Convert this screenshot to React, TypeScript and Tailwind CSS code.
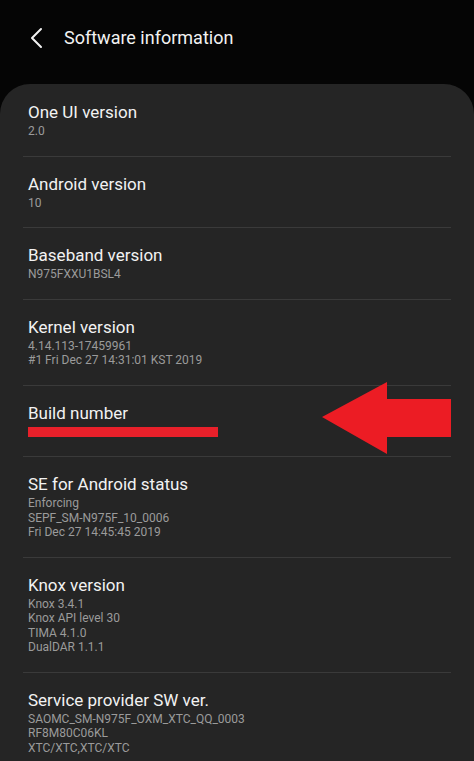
import React from "react";

type Item = { title: string; lines: string[]; redacted?: boolean };

const items: Item[] = [
  { title: "One UI version", lines: ["2.0"] },
  { title: "Android version", lines: ["10"] },
  { title: "Baseband version", lines: ["N975FXXU1BSL4"] },
  { title: "Kernel version", lines: ["4.14.113-17459961", "#1 Fri Dec 27 14:31:01 KST 2019"] },
  { title: "Build number", lines: [], redacted: true },
  { title: "SE for Android status", lines: ["Enforcing", "SEPF_SM-N975F_10_0006", "Fri Dec 27 14:45:45 2019"] },
  { title: "Knox version", lines: ["Knox 3.4.1", "Knox API level 30", "TIMA 4.1.0", "DualDAR 1.1.1"] },
  {
    title: "Service provider SW ver.",
    lines: ["SAOMC_SM-N975F_OXM_XTC_QQ_0003", "RF8M80C06KL", "XTC/XTC,XTC/XTC"],
  },
];

function Arrow() {
  return (
    <svg className="absolute left-[294px] top-[-43px]" width="130" height="72" viewBox="0 0 130 72">
      <polygon points="0,35 65,0 65,17 129,17 129,55 65,55 65,72" fill="#ec1c24" />
    </svg>
  );
}

export default function App() {
  return (
    <div
      className="w-[474px] h-[761px] overflow-hidden bg-[#050505] flex flex-col"
      style={{ fontFamily: "Roboto, 'Noto Sans', sans-serif" }}
    >
      {/* header */}
      <div className="h-[84px] flex items-center shrink-0 pb-[8px]">
        <svg className="ml-[29px]" width="16" height="22" viewBox="0 0 16 22">
          <polyline points="12,2 3,11 12,20" fill="none" stroke="#f2f2f2" strokeWidth="2" strokeLinecap="round" strokeLinejoin="round" />
        </svg>
        <span className="ml-[19px] text-[18px] text-[#f2f2f2] leading-none">Software information</span>
      </div>

      {/* card */}
      <div className="flex-1 bg-[#252525] rounded-t-[30px] px-[23px] pt-[1px]">
        {items.map((item, i) => (
          <div key={item.title} className={i > 0 ? "border-t border-[#3a3a3a]" : ""}>
            <div className="relative px-[5px] pt-[17px] pb-[17px]">
              <div className="text-[17px] leading-[20px] text-[#f2f2f2]">{item.title}</div>
              <div className="mt-[2px]">
                {item.redacted ? (
                  <div className="relative h-[14.5px] flex items-center">
                    <div className="w-[190px] h-[10px] bg-[#e8202a]" />
                    <Arrow />
                  </div>
                ) : (
                  item.lines.map((l) => (
                    <div key={l} className="text-[12px] leading-[14.5px] text-[#9b9b9b]">
                      {l}
                    </div>
                  ))
                )}
              </div>
            </div>
          </div>
        ))}
      </div>
    </div>
  );
}
